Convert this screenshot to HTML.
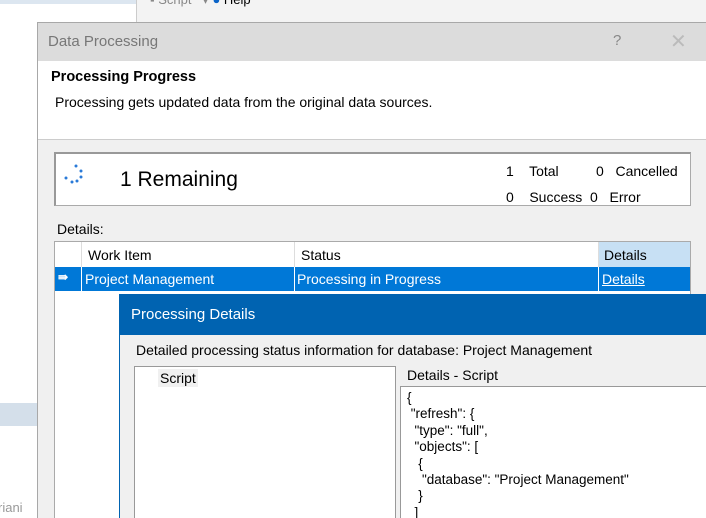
<!DOCTYPE html>
<html style="width:706px;height:518px;overflow:hidden"><head><style>
*{margin:0;padding:0;box-sizing:border-box}
body{width:706px;height:518px;overflow:hidden;position:relative;background:#fff;font-family:"Liberation Sans",sans-serif;font-size:14px;color:#000}
.a{position:absolute;white-space:nowrap}
</style></head><body>
<div class="a" style="left:0;top:0;width:136px;height:4px;background:#dce6f0"></div>
<div class="a" style="left:136px;top:0;width:570px;height:22px;background:#f3f3f3;border-left:1px solid #ccc"></div>
<div class="a" style="left:150px;top:-8px;color:#888;font-size:13px">▪ Script &nbsp;&nbsp;▾ <span style="color:#0a64c8">●</span> <span style="color:#000">Help</span></div>
<div class="a" style="left:0;top:403px;width:37px;height:23px;background:#d4dfea"></div>
<div class="a" style="left:-2px;top:500px;color:#999;font-size:13px">riani</div>

<div class="a" style="left:37px;top:22px;width:680px;height:500px;background:#f0f0f0;border:1px solid #a8a8a8">
 <div class="a" style="left:0;top:0;width:100%;height:38px;background:#dcdcdc"></div>
 <div class="a" style="left:10px;top:10px;color:#777;font-size:15px">Data Processing</div>
 <div class="a" style="left:575px;top:9px;color:#888;font-size:15px">?</div>
 <div class="a" style="left:632px;top:6px;color:#bbb;font-size:20px">✕</div>
 <div class="a" style="left:0;top:38px;width:100%;height:79px;background:#fff;border-bottom:1px solid #ccc"></div>
 <div class="a" style="left:13px;top:46px;font-weight:bold;font-size:14.5px">Processing Progress</div>
 <div class="a" style="left:17px;top:71px;font-size:14px">Processing gets updated data from the original data sources.</div>
 <div class="a" style="left:16px;top:129px;width:637px;height:54px;background:#fff;border:1px solid #aaa;border-top:2px solid #999;border-left:2px solid #999"></div>
 <svg class="a" style="left:24px;top:140px" width="28" height="28"><g fill="#2a7ad8"><circle cx="14" cy="3" r="1.5"/><circle cx="19" cy="8" r="1.5"/><circle cx="19" cy="14" r="1.5"/><circle cx="15" cy="18" r="1.5"/><circle cx="10" cy="19" r="1.5"/><circle cx="4" cy="15" r="1.5"/></g></svg>
 <div class="a" style="left:82px;top:145px;font-size:21px">1 Remaining</div>
 <div class="a" style="left:468px;top:140px;font-size:14px">1&nbsp;&nbsp;&nbsp; Total</div>
 <div class="a" style="left:558px;top:140px;font-size:14px">0&nbsp;&nbsp;&nbsp;Cancelled</div>
 <div class="a" style="left:468px;top:166px;font-size:14px">0&nbsp;&nbsp;&nbsp; Success&nbsp; 0&nbsp;&nbsp;&nbsp;Error</div>
 <div class="a" style="left:19px;top:198px;font-size:14px">Details:</div>
 <div class="a" style="left:16px;top:218px;width:637px;height:300px;background:#fff;border:1px solid #aaa"></div>
 <div class="a" style="left:560px;top:219px;width:92px;height:25px;background:#c7e0f4"></div>
 <div class="a" style="left:43px;top:219px;width:1px;height:25px;background:#ddd"></div>
 <div class="a" style="left:256px;top:219px;width:1px;height:25px;background:#ddd"></div>
 <div class="a" style="left:560px;top:219px;width:1px;height:25px;background:#ddd"></div>
 <div class="a" style="left:50px;top:224px">Work Item</div>
 <div class="a" style="left:263px;top:224px">Status</div>
 <div class="a" style="left:566px;top:224px">Details</div>
 <div class="a" style="left:17px;top:244px;width:635px;height:24px;background:#0078d7"></div>
 <div class="a" style="left:43px;top:244px;width:1px;height:24px;background:#fff"></div>
 <div class="a" style="left:256px;top:244px;width:1px;height:24px;background:#fff"></div>
 <div class="a" style="left:560px;top:244px;width:1px;height:24px;background:#fff"></div>
 <div class="a" style="left:20px;top:247px;color:#fff;font-size:12px;font-weight:bold">⇛</div>
 <div class="a" style="left:47px;top:248px;color:#fff">Project Management</div>
 <div class="a" style="left:259px;top:248px;color:#fff">Processing in Progress</div>
 <div class="a" style="left:564px;top:248px;color:#fff;text-decoration:underline">Details</div>
</div>

<div class="a" style="left:119px;top:294px;width:600px;height:230px;background:#f0f0f0;border-left:1px solid #0063b1">
 <div class="a" style="left:0;top:0;width:100%;height:41px;background:#0063b1"></div>
 <div class="a" style="left:11px;top:12px;color:#fff;font-size:15px">Processing Details</div>
 <div class="a" style="left:16px;top:48px">Detailed processing status information for database: Project Management</div>
 <div class="a" style="left:14px;top:72px;width:262px;height:160px;background:#fff;border:1px solid #999"></div>
 <div class="a" style="left:38px;top:75px;background:#f0f0f0;padding:1px 2px">Script</div>
 <div class="a" style="left:287px;top:73px">Details - Script</div>
 <div class="a" style="left:280px;top:92px;width:320px;height:140px;background:#fff;border:1px solid #999"></div>
 <div class="a" style="left:287px;top:96px;font-size:13.5px;line-height:16.4px;white-space:pre">{
 "refresh": {
  "type": "full",
  "objects": [
   {
    "database": "Project Management"
   }
  ]</div>
</div>
</body></html>
